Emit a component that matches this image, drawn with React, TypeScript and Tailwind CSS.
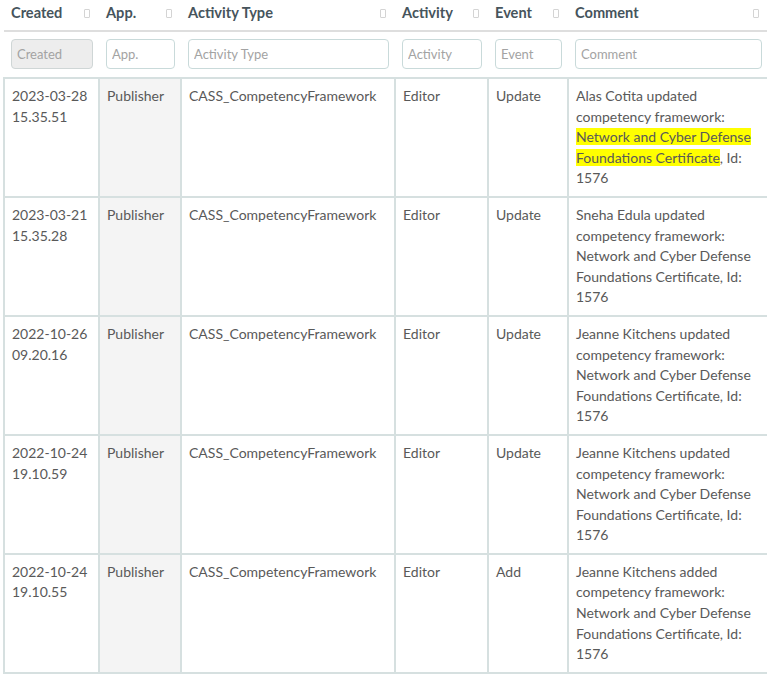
import React from 'react';

type Row = {
  created: [string, string];
  app: string;
  type: string;
  activity: string;
  event: string;
  who: string;
  verb: string;
  highlight?: boolean;
};

const rows: Row[] = [
  { created: ['2023-03-28', '15.35.51'], app: 'Publisher', type: 'CASS_CompetencyFramework', activity: 'Editor', event: 'Update', who: 'Alas Cotita', verb: 'updated', highlight: true },
  { created: ['2023-03-21', '15.35.28'], app: 'Publisher', type: 'CASS_CompetencyFramework', activity: 'Editor', event: 'Update', who: 'Sneha Edula', verb: 'updated' },
  { created: ['2022-10-26', '09.20.16'], app: 'Publisher', type: 'CASS_CompetencyFramework', activity: 'Editor', event: 'Update', who: 'Jeanne Kitchens', verb: 'updated' },
  { created: ['2022-10-24', '19.10.59'], app: 'Publisher', type: 'CASS_CompetencyFramework', activity: 'Editor', event: 'Update', who: 'Jeanne Kitchens', verb: 'updated' },
  { created: ['2022-10-24', '19.10.55'], app: 'Publisher', type: 'CASS_CompetencyFramework', activity: 'Editor', event: 'Add', who: 'Jeanne Kitchens', verb: 'added' },
];

const columns = ['Created', 'App.', 'Activity Type', 'Activity', 'Event', 'Comment'];

function SortBox() {
  return <span className="inline-block w-[6px] h-[9px] border border-[#d4d4d4] rounded-[1px]" />;
}

export default function App() {
  const cell = 'border-2 border-[#d6e0e0] px-[7px] py-[7px] align-top';

  return (
    <div className="bg-white min-h-screen pl-[3px]" style={{ fontFamily: 'Lato, "Open Sans", sans-serif' }}>
      <table className="table-fixed border-collapse w-[764px] text-[14px] leading-[20.6px] text-[#595959]">
        <colgroup>
          <col className="w-[95px]" />
          <col className="w-[82px]" />
          <col className="w-[214px]" />
          <col className="w-[93px]" />
          <col className="w-[80px]" />
          <col className="w-[200px]" />
        </colgroup>
        <thead>
          <tr className="border-b-2 border-[#dedede]">
            {columns.map((c) => (
              <th key={c} className="text-left font-bold text-[14.6px] leading-[20px] text-[#46545c] pt-[3px] pb-[7px] pl-[7px] pr-[9px]">
                <div className="flex items-center justify-between">
                  <span>{c}</span>
                  <SortBox />
                </div>
              </th>
            ))}
          </tr>
          <tr>
            {columns.map((c, i) => (
              <th key={c} className="font-normal pt-[7px] pb-[8px] pl-[7px] pr-[6px]">
                <input
                  placeholder={c}
                  disabled={i === 0}
                  className={`w-full h-[30px] rounded-[4px] border px-[5px] text-[13px] placeholder:text-[#a3a3a3] focus:outline-none ${
                    i === 0 ? 'bg-[#ededed] border-[#cfd6d6]' : 'bg-white border-[#c9dada]'
                  }`}
                />
              </th>
            ))}
          </tr>
        </thead>
        <tbody>
          {rows.map((r, idx) => (
            <tr key={idx}>
              <td className={cell}>
                {r.created[0]}
                <br />
                {r.created[1]}
              </td>
              <td className={`${cell} bg-[#f4f4f4]`}>{r.app}</td>
              <td className={cell}>{r.type}</td>
              <td className={cell}>{r.activity}</td>
              <td className={cell}>{r.event}</td>
              <td className={cell}>
                {r.who} {r.verb} competency framework:{' '}
                {r.highlight ? (
                  <span className="bg-[#ffff00]">Network and Cyber Defense Foundations Certificate</span>
                ) : (
                  'Network and Cyber Defense Foundations Certificate'
                )}
                , Id: 1576
              </td>
            </tr>
          ))}
        </tbody>
      </table>
    </div>
  );
}
